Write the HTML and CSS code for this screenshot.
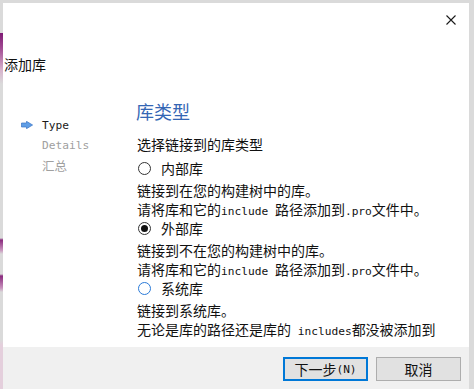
FILE: index.html
```html
<!DOCTYPE html>
<html lang="zh-CN">
<head>
<meta charset="utf-8">
<title>添加库</title>
<link rel="stylesheet" href="styles.css">
</head>
<body>
<div class="window">
  <div class="titlebar">
    <div class="close">
      <svg width="10" height="10" viewBox="0 0 10 10"><path d="M0.5 0.5 L9.5 9.5 M9.5 0.5 L0.5 9.5" stroke="#1a1a1a" stroke-width="1.1" fill="none"/></svg>
    </div>
  </div>
  <div class="title">添加库</div>
  <div class="main">
    <div class="nav">
      <div class="nav-item current">
        <svg class="arrow" width="12" height="8" viewBox="0 0 12 8"><polygon points="0.5,2 5.5,2 5.5,0.3 11.6,4 5.5,7.7 5.5,6 0.5,6" fill="#5f9ee6" stroke="#3a74c4" stroke-width="0.7"/></svg>
        <span class="lat">Type</span>
      </div>
      <div class="nav-item"><span class="slot"></span><span class="lat">Details</span></div>
      <div class="nav-item"><span class="slot"></span><span class="cjk">汇总</span></div>
    </div>
    <div class="page">
      <div class="heading">库类型</div>
      <div class="desc">选择链接到的库类型</div>
      <div class="radio-row first"><span class="radio"></span><span>内部库</span></div>
      <div class="note">
        <div class="line">链接到在您的构建树中的库。</div>
        <div class="line">请将库和它的<span class="lat">include </span>路径添加到<span class="lat">.pro</span>文件中。</div>
      </div>
      <div class="radio-row"><span class="radio checked"></span><span>外部库</span></div>
      <div class="note">
        <div class="line">链接到不在您的构建树中的库。</div>
        <div class="line">请将库和它的<span class="lat">include </span>路径添加到<span class="lat">.pro</span>文件中。</div>
      </div>
      <div class="radio-row"><span class="radio hover"></span><span>系统库</span></div>
      <div class="note">
        <div class="line">链接到系统库。</div>
        <div class="line">无论是库的路径还是库的<span class="lat"> includes</span>都没被添加到</div>
      </div>
    </div>
  </div>
  <div class="footer">
    <button class="btn default">下一步<span class="lat">(N)</span></button>
    <button class="btn">取消</button>
  </div>
</div>
</body>
</html>
```

FILE: styles.css
```css
html, body {
  margin: 0;
  padding: 0;
}
body {
  width: 474px;
  height: 389px;
  overflow: hidden;
  background:
    linear-gradient(to bottom,
      transparent 0 33px,
      #7e1a74 33px, #a14a92 48px, #d6b3cc 70px, transparent 84px,
      transparent 238px, #8a2a7e 240px, #c893bd 250px, transparent 254px,
      transparent 274px, #8a2a7e 276px, #c893bd 288px, transparent 292px,
      transparent 340px, #e4cfdc 345px, #e4cfdc 389px) no-repeat left top / 3px 100%,
    #dadada;
  font-family: "Noto Sans CJK SC", sans-serif;
  color: #111;
}
.window {
  margin: 3px 0 0 3px;
  width: 466px;
  height: 386px;
  background: #fff;
  display: flex;
  flex-direction: column;
}
.titlebar {
  height: 34px;
  display: flex;
  justify-content: flex-end;
}
.close {
  width: 36px;
  height: 34px;
  display: flex;
  align-items: center;
  justify-content: center;
}
.title {
  margin-top: 17px;
  padding-left: 1px;
  font-size: 14px;
  line-height: 20px;
  height: 20px;
}
.main {
  flex: 1;
  display: flex;
  padding-top: 2px;
}
.nav {
  width: 115px;
  padding: 39px 0 0 18px;
  display: flex;
  flex-direction: column;
}
.nav-item {
  display: flex;
  align-items: center;
  gap: 9px;
  height: 20px;
  color: #a0a0a0;
}
.nav-item.current {
  color: #1a1a1a;
}
.arrow, .slot {
  width: 12px;
  flex: none;
}
.lat {
  font-family: "DejaVu Sans Mono", monospace;
  font-size: 11.2px;
}
.cjk {
  font-size: 12.5px;
}
.page {
  flex: 1;
  padding-top: 23px;
  display: flex;
  flex-direction: column;
  font-size: 14px;
}
.heading {
  font-size: 18px;
  line-height: 24px;
  height: 24px;
  color: #3466b4;
}
.desc {
  margin-top: 11px;
  line-height: 20px;
  height: 20px;
  padding-left: 1px;
}
.radio-row {
  margin-top: 0;
  height: 20px;
  display: flex;
  align-items: center;
  gap: 10px;
  padding-left: 2px;
}
.radio-row.first {
  margin-top: 4px;
}
.radio {
  width: 11px;
  height: 11px;
  border: 1px solid #333;
  border-radius: 50%;
  background: #fff;
  display: flex;
  align-items: center;
  justify-content: center;
}
.radio.checked::after {
  content: "";
  width: 7px;
  height: 7px;
  border-radius: 50%;
  background: #111;
}
.radio.hover {
  border-color: #2a7ad8;
}
.note {
  margin-top: 3px;
  padding-left: 1px;
}
.line {
  height: 18.5px;
  line-height: 18.5px;
  white-space: nowrap;
}
.footer {
  height: 42px;
  box-sizing: border-box;
  background: #f0f0f0;
  display: flex;
  justify-content: flex-end;
  align-items: flex-start;
  gap: 8px;
  padding: 10px 8px 0 0;
}
.btn {
  width: 85px;
  height: 24px;
  margin: 0;
  padding: 0;
  border: 1px solid #adadad;
  background: #e1e1e1;
  font-family: "Noto Sans CJK SC", sans-serif;
  font-size: 14px;
  color: #111;
  display: flex;
  align-items: center;
  justify-content: center;
}
.btn.default {
  border: 2px solid #0078d7;
}
```
